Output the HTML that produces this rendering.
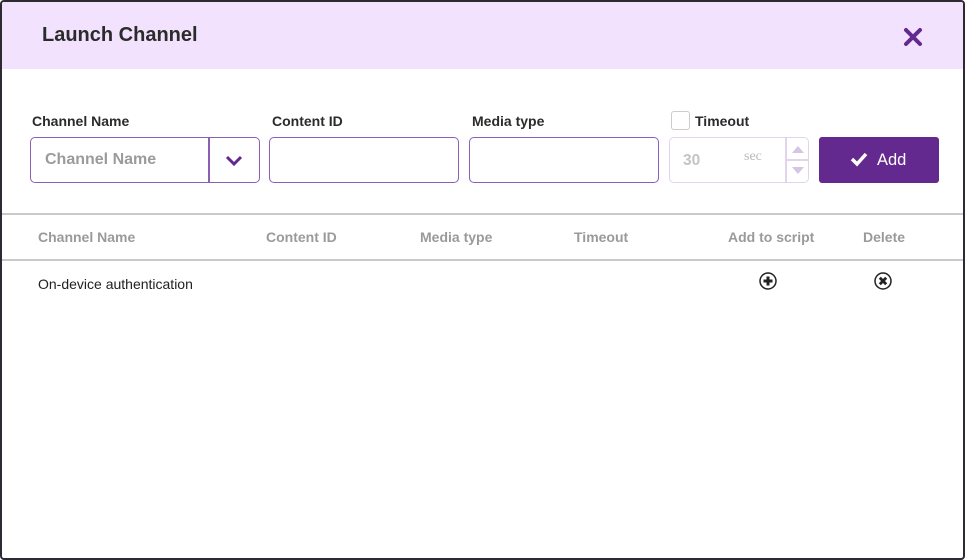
<!DOCTYPE html>
<html><head><style>
*{box-sizing:border-box;margin:0;padding:0}
body{width:965px;height:560px;overflow:hidden;background:#fff;font-family:"Liberation Sans",Arial,sans-serif}
.frame{position:absolute;left:0;top:0;width:965px;height:560px;border:2px solid #2e2a33;border-radius:4px;overflow:hidden}
.hdr{position:absolute;left:0;top:0;right:0;height:67px;background:#f2e2fd}
.title{position:absolute;left:40px;top:22px;font-size:20px;font-weight:bold;color:#2b2b2b}
.lbl{position:absolute;top:111px;font-size:14px;font-weight:bold;color:#2b2b2b}
.inp{position:absolute;top:135px;height:46px;border:1.5px solid #8c5fb5;border-radius:5px;background:#fff}
.t{position:absolute;font-size:14px;font-weight:bold;color:#9a9a9a}
.hr{position:absolute;left:0;right:0;height:2px;background:#c9c9c9}
</style></head><body><div class="frame">
<div class="hdr"></div>
<div class="title">Launch Channel</div>
<svg style="position:absolute;left:901px;top:25px" width="20" height="20" viewBox="0 0 20 20"><path d="M3 3L17 17M17 3L3 17" stroke="#64298f" stroke-width="4" stroke-linecap="round"/></svg>
<div class="lbl" style="left:30px">Channel Name</div>
<div class="lbl" style="left:270px">Content ID</div>
<div class="lbl" style="left:470px">Media type</div>
<div style="position:absolute;left:669px;top:109px;width:19px;height:19px;border:1.5px solid #ccc;border-radius:3px"></div>
<div class="lbl" style="left:693px">Timeout</div>
<div class="inp" style="left:28px;width:230px"><span style="position:absolute;left:14px;top:13px;font-size:16px;font-weight:bold;color:#9b9b9b">Channel Name</span><div style="position:absolute;left:177px;top:0;width:1.5px;height:100%;background:#8c5fb5"></div><svg style="position:absolute;left:193px;top:15px" width="20" height="14" viewBox="0 0 20 14"><path d="M3 4L10 11L17 4" stroke="#64298f" stroke-width="3" fill="none"/></svg></div>
<div class="inp" style="left:267px;width:190px"></div>
<div class="inp" style="left:467px;width:190px"></div>
<div style="position:absolute;left:667px;top:135px;width:140px;height:46px;border:1.5px solid #e3d4ee;border-radius:5px">
<span style="position:absolute;left:13px;top:14px;font-size:15.5px;font-weight:bold;color:#c4c4c4">30</span>
<span style="position:absolute;left:74px;top:11px;font-size:14px;font-family:'Liberation Serif',serif;color:#bbb">sec</span>
<div style="position:absolute;left:115px;top:0;width:1.5px;height:100%;background:#e3d4ee"></div>
<div style="position:absolute;left:115px;top:21px;width:24px;height:1.5px;background:#e3d4ee"></div>
<svg style="position:absolute;left:121px;top:6px" width="14" height="10"><path d="M1 9L7 2L13 9Z" fill="#d5c4e4"/></svg>
<svg style="position:absolute;left:121px;top:28px" width="14" height="10"><path d="M1 1L7 8L13 1Z" fill="#d5c4e4"/></svg>
</div>
<div style="position:absolute;left:817px;top:135px;width:120px;height:46px;background:#64298f;border-radius:3px">
<svg style="position:absolute;left:31px;top:14px" width="18" height="16" viewBox="0 0 18 16"><path d="M2 8L7 13L16 3" stroke="#fff" stroke-width="3.5" fill="none"/></svg>
<span style="position:absolute;left:58px;top:14px;font-size:16.5px;color:#fff">Add</span></div>
<div class="hr" style="top:211px"></div>
<div class="t" style="left:36px;top:227px">Channel Name</div>
<div class="t" style="left:264px;top:227px">Content ID</div>
<div class="t" style="left:418px;top:227px">Media type</div>
<div class="t" style="left:572px;top:227px">Timeout</div>
<div class="t" style="left:726px;top:227px">Add to script</div>
<div class="t" style="left:861px;top:227px">Delete</div>
<div class="hr" style="top:257px"></div>
<div style="position:absolute;left:36px;top:274px;font-size:14px;color:#222">On-device authentication</div>
<svg style="position:absolute;left:757px;top:270px" width="18" height="18" viewBox="0 0 18 18"><circle cx="9" cy="9" r="8" stroke="#222" stroke-width="1.5" fill="none"/><path d="M9 4.5V13.5M4.5 9H13.5" stroke="#222" stroke-width="3"/></svg>
<svg style="position:absolute;left:872px;top:270px" width="18" height="18" viewBox="0 0 18 18"><circle cx="9" cy="9" r="8" stroke="#222" stroke-width="1.5" fill="none"/><path d="M5.8 5.8L12.2 12.2M12.2 5.8L5.8 12.2" stroke="#222" stroke-width="2.8"/></svg>
</div></body></html>
